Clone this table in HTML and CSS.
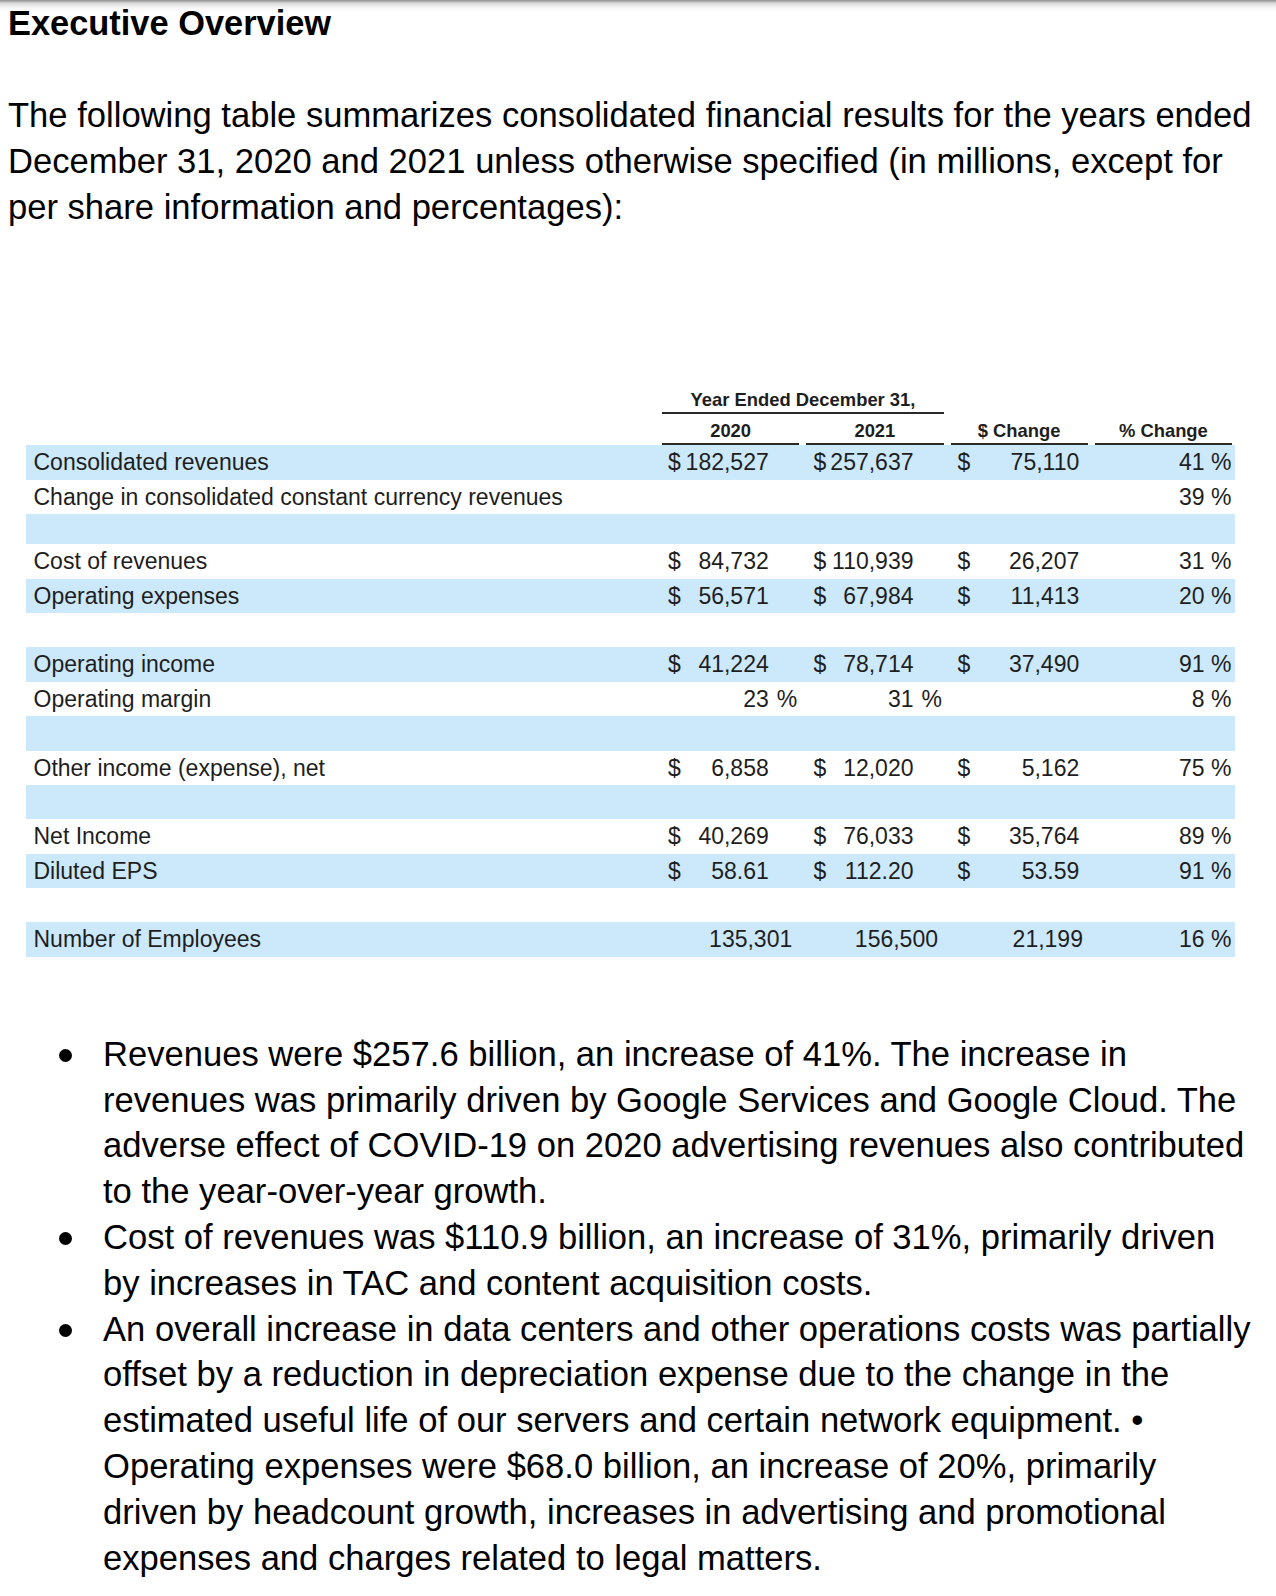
FILE: index.html
```html
<!DOCTYPE html>
<html lang="en">
<head>
<meta charset="utf-8">
<title>Executive Overview</title>
<link rel="stylesheet" href="styles.css">
</head>
<body>
<div class="page">
  <h1 class="title">Executive Overview</h1>
  <p class="intro">The following table summarizes consolidated financial results for the years ended December 31, 2020 and 2021 unless otherwise specified (in millions, except for per share information and percentages):</p>

  <div class="fin">
    <div class="hrow">
      <div></div>
      <div class="yr-head">Year Ended December 31,</div>
      <div></div>
      <div></div>
    </div>
    <div class="hrow hrow2">
      <div></div>
      <div class="ch">2020</div>
      <div class="ch">2021</div>
      <div class="ch">$ Change</div>
      <div class="ch">% Change</div>
    </div>

    <div class="row band">
      <div class="lbl">Consolidated revenues</div>
      <div class="v c2"><span class="cur">$</span><span class="num">182,527</span><span class="sfx"></span></div>
      <div class="v c3"><span class="cur">$</span><span class="num">257,637</span><span class="sfx"></span></div>
      <div class="v c4"><span class="cur">$</span><span class="num">75,110</span></div>
      <div class="v c5"><span class="num">41 %</span></div>
    </div>
    <div class="row">
      <div class="lbl">Change in consolidated constant currency revenues</div>
      <div></div><div></div><div></div>
      <div class="v c5"><span class="num">39 %</span></div>
    </div>
    <div class="row band short"></div>
    <div class="row">
      <div class="lbl">Cost of revenues</div>
      <div class="v c2"><span class="cur">$</span><span class="num">84,732</span><span class="sfx"></span></div>
      <div class="v c3"><span class="cur">$</span><span class="num">110,939</span><span class="sfx"></span></div>
      <div class="v c4"><span class="cur">$</span><span class="num">26,207</span></div>
      <div class="v c5"><span class="num">31 %</span></div>
    </div>
    <div class="row band">
      <div class="lbl">Operating expenses</div>
      <div class="v c2"><span class="cur">$</span><span class="num">56,571</span><span class="sfx"></span></div>
      <div class="v c3"><span class="cur">$</span><span class="num">67,984</span><span class="sfx"></span></div>
      <div class="v c4"><span class="cur">$</span><span class="num">11,413</span></div>
      <div class="v c5"><span class="num">20 %</span></div>
    </div>
    <div class="row"></div>
    <div class="row band">
      <div class="lbl">Operating income</div>
      <div class="v c2"><span class="cur">$</span><span class="num">41,224</span><span class="sfx"></span></div>
      <div class="v c3"><span class="cur">$</span><span class="num">78,714</span><span class="sfx"></span></div>
      <div class="v c4"><span class="cur">$</span><span class="num">37,490</span></div>
      <div class="v c5"><span class="num">91 %</span></div>
    </div>
    <div class="row">
      <div class="lbl">Operating margin</div>
      <div class="v c2"><span class="num">23</span><span class="sfx">%</span></div>
      <div class="v c3"><span class="num">31</span><span class="sfx">%</span></div>
      <div></div>
      <div class="v c5"><span class="num">8 %</span></div>
    </div>
    <div class="row band"></div>
    <div class="row">
      <div class="lbl">Other income (expense), net</div>
      <div class="v c2"><span class="cur">$</span><span class="num">6,858</span><span class="sfx"></span></div>
      <div class="v c3"><span class="cur">$</span><span class="num">12,020</span><span class="sfx"></span></div>
      <div class="v c4"><span class="cur">$</span><span class="num">5,162</span></div>
      <div class="v c5"><span class="num">75 %</span></div>
    </div>
    <div class="row band"></div>
    <div class="row">
      <div class="lbl">Net Income</div>
      <div class="v c2"><span class="cur">$</span><span class="num">40,269</span><span class="sfx"></span></div>
      <div class="v c3"><span class="cur">$</span><span class="num">76,033</span><span class="sfx"></span></div>
      <div class="v c4"><span class="cur">$</span><span class="num">35,764</span></div>
      <div class="v c5"><span class="num">89 %</span></div>
    </div>
    <div class="row band">
      <div class="lbl">Diluted EPS</div>
      <div class="v c2"><span class="cur">$</span><span class="num">58.61</span><span class="sfx"></span></div>
      <div class="v c3"><span class="cur">$</span><span class="num">112.20</span><span class="sfx"></span></div>
      <div class="v c4"><span class="cur">$</span><span class="num">53.59</span></div>
      <div class="v c5"><span class="num">91 %</span></div>
    </div>
    <div class="row"></div>
    <div class="row band">
      <div class="lbl">Number of Employees</div>
      <div class="v e2"><span class="num">135,301</span></div>
      <div class="v e3"><span class="num">156,500</span></div>
      <div class="v e4"><span class="num">21,199</span></div>
      <div class="v c5"><span class="num">16 %</span></div>
    </div>
  </div>

  <ul class="points">
    <li><span class="dot"></span><span class="txt">Revenues were $257.6 billion, an increase of 41%. The increase in revenues was primarily driven by Google Services and Google Cloud. The adverse effect of COVID-19 on 2020 advertising revenues also contributed to the year-over-year growth.</span></li>
    <li><span class="dot"></span><span class="txt">Cost of revenues was $110.9 billion, an increase of 31%, primarily driven by increases in TAC and content acquisition costs.</span></li>
    <li><span class="dot"></span><span class="txt">An overall increase in data centers and other operations costs was partially offset by a reduction in depreciation expense due to the change in the estimated useful life of our servers and certain network equipment. • Operating expenses were $68.0 billion, an increase of 20%, primarily driven by headcount growth, increases in advertising and promotional expenses and charges related to legal matters.</span></li>
  </ul>
</div>
</body>
</html>
```

FILE: styles.css
```css
html, body {
  margin: 0;
  padding: 0;
  background: #ffffff;
}

body {
  background: linear-gradient(to bottom, #8e8e8e 0px, #d6d6d6 3px, #f4f4f4 7px, #ffffff 12px) no-repeat;
  background-size: 100% 12px;
  font-family: "Liberation Sans", Arial, sans-serif;
  color: #000;
}

.page {
  padding: 5px 18px 0 8px;
}

.title {
  margin: 0;
  font-size: 34.4px;
  font-weight: bold;
  line-height: 37px;
  height: 37px;
}

.intro {
  margin: 51px 0 0 0;
  font-size: 34.6px;
  line-height: 45.8px;
}

/* table */
.fin {
  margin: 159px 0 0 18px;
  width: 1209px;
  color: #1e1e1e;
}

.hrow,
.row {
  display: grid;
  grid-template-columns: 632px repeat(4, 144.25px);
}

.yr-head {
  grid-column: 2 / span 2;
  margin: 0 2.5px 0 4px;
  text-align: center;
  font-weight: bold;
  font-size: 18.4px;
  line-height: 22px;
  padding-bottom: 1px;
  border-bottom: 2px solid #2a2a2a;
}

.hrow2 {
  margin-top: 6px;
}

.ch {
  margin: 0 3px 0 4px;
  text-align: center;
  font-weight: bold;
  font-size: 18.4px;
  line-height: 22px;
  padding-bottom: 1px;
  border-bottom: 2px solid #2a2a2a;
}

.row {
  height: 34.4px;
  font-size: 23px;
  line-height: 34.4px;
}

.row.short {
  height: 30px;
}

.band {
  background: #cce8fb;
}

.lbl {
  padding-left: 7.5px;
  white-space: nowrap;
}

.v {
  display: flex;
  white-space: nowrap;
}

.v .num {
  flex: 1;
  text-align: right;
}

.c2 {
  padding: 0 5px 0 10px;
}

.c3 {
  padding: 0 4.5px 0 11.3px;
}

.c4 {
  padding: 0 11.5px 0 11px;
}

.c5 {
  padding: 0 3.6px 0 0;
}

.sfx {
  width: 28.5px;
  text-align: right;
}

.e2 {
  padding-right: 10px;
}

.e3 {
  padding-right: 8.5px;
}

.e4 {
  padding-right: 7.8px;
}

/* bullets */
.points {
  list-style: none;
  margin: 75px 0 0 0;
  padding: 0;
  font-size: 34.6px;
  line-height: 45.8px;
}

.points li {
  display: grid;
  grid-template-columns: 95px 1fr;
}

.dot {
  display: block;
  width: 13px;
  height: 13px;
  margin: 17px 0 0 50.5px;
  border-radius: 50%;
  background: #000;
}
```
